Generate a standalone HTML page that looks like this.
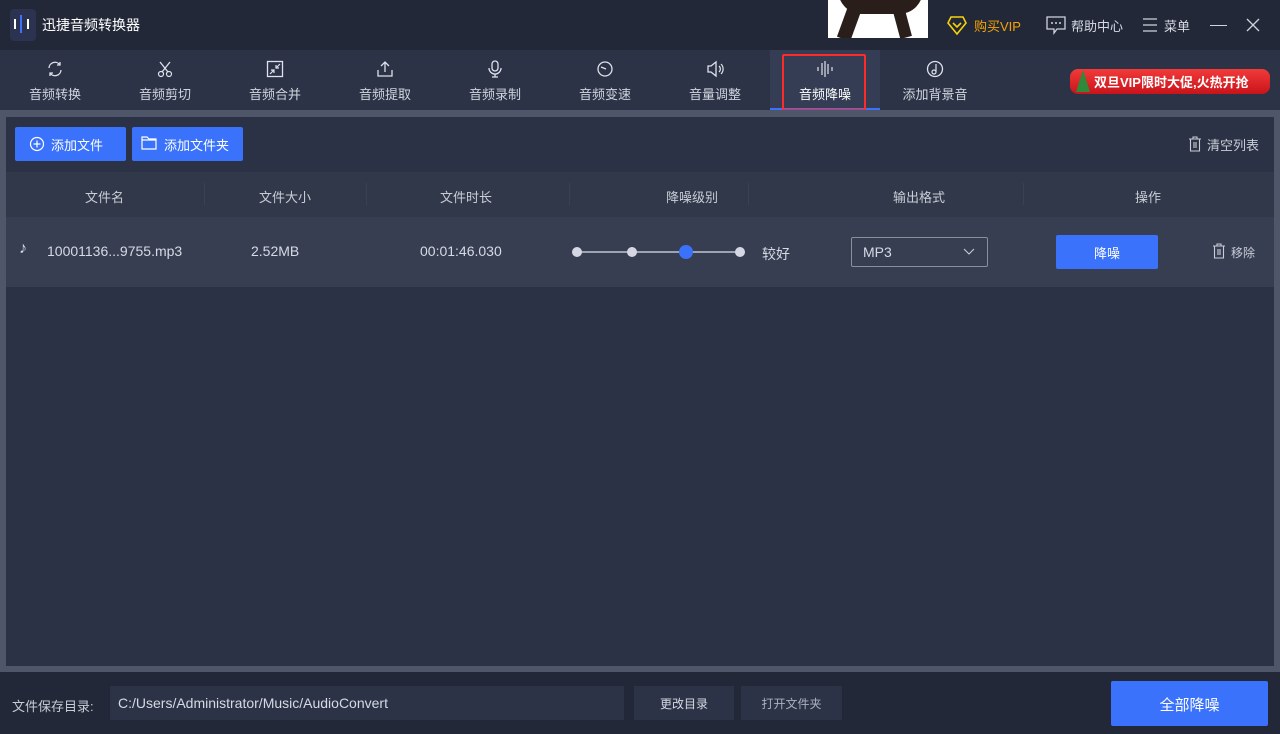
<!DOCTYPE html>
<html><head><meta charset="utf-8"><style>
*{margin:0;padding:0;box-sizing:border-box}
body{width:1280px;height:734px;overflow:hidden;background:#232839;font-family:"Liberation Sans","Noto Sans CJK SC",sans-serif;color:#d6dae4;position:relative;font-size:13px}
.a{position:absolute}
.tab{position:absolute;top:50px;height:60px;width:110px;text-align:center;font-size:13px;color:#d0d4de}
.tab svg{position:absolute;left:46px;top:10px}
.tab span{position:absolute;left:0;right:0;top:34px}
.hd{position:absolute;top:187px;font-size:13px;color:#c9cdd7;text-align:center}
.btn{position:absolute;background:#3a72fb;color:#fff;border-radius:2px;font-size:13px}
</style></head><body>
<div class="a" style="left:10px;top:9px;width:26px;height:32px;background:#2b3350;border-radius:4px"></div>
<div class="a" style="left:14px;top:19px;width:2px;height:10px;background:#fff"></div>
<div class="a" style="left:20px;top:15px;width:2px;height:18px;background:#3a72fb"></div>
<div class="a" style="left:27px;top:19px;width:2px;height:10px;background:#fff"></div>
<div class="a" style="left:42px;top:15px;font-size:14px;color:#fff">迅捷音频转换器</div>
<div class="a" style="left:828px;top:0;width:100px;height:38px;background:#fff;overflow:hidden">
<div class="a" style="left:10px;top:-10px;width:85px;height:24px;background:#2a1e1a;border-radius:0 0 40px 40px"></div>
<div class="a" style="left:14px;top:8px;width:14px;height:32px;background:#2a1e1a;transform:rotate(20deg)"></div>
<div class="a" style="left:68px;top:6px;width:12px;height:32px;background:#2a1e1a;transform:rotate(-15deg)"></div>
</div>
<svg class="a" style="left:946px;top:14px" width="22" height="22" viewBox="0 0 22 22"><path d="M5 3H17L20 9L11 20L2 9Z" fill="none" stroke="#f5d20a" stroke-width="1.6"/><path d="M7 9L11 13L15 9" fill="none" stroke="#f5d20a" stroke-width="1.6"/></svg>
<div class="a" style="left:974px;top:16px;font-size:13px;color:#f5a300">购买VIP</div>
<svg class="a" style="left:1045px;top:15px" width="22" height="20"><path d="M2 2H20V14H12L9 18V14H2Z" fill="none" stroke="#cfd3dc" stroke-width="1.3"/><circle cx="7" cy="8" r="1" fill="#cfd3dc"/><circle cx="11" cy="8" r="1" fill="#cfd3dc"/><circle cx="15" cy="8" r="1" fill="#cfd3dc"/></svg>
<div class="a" style="left:1071px;top:16px;font-size:13px;color:#d6dae4">帮助中心</div>
<svg class="a" style="left:1142px;top:17px" width="16" height="16"><path d="M1 2H15M1 8H15M1 14H15" stroke="#cfd3dc" stroke-width="1.3"/></svg>
<div class="a" style="left:1164px;top:16px;font-size:13px;color:#d6dae4">菜单</div>
<div class="a" style="left:1210px;top:25px;width:17px;height:1px;background:#cfd3dc"></div>
<svg class="a" style="left:1246px;top:18px" width="14" height="14"><path d="M1 1L13 13M13 1L1 13" stroke="#cfd3dc" stroke-width="1.3"/></svg>
<div class="a" style="left:0;top:50px;width:1280px;height:60px;background:#2c3347"></div>
<div class="a" style="left:770px;top:50px;width:110px;height:60px;background:#353d54"></div>
<div class="a" style="left:770px;top:108px;width:110px;height:3px;background:#3a72fb"></div>
<div class="a" style="left:782px;top:54px;width:84px;height:57px;border:2px solid #ff2a2a;border-radius:2px"></div>
<div class="tab" style="left:0"><svg width="18" height="18"><path d="M3 8A6 6 0 0 1 14 5M15 10A6 6 0 0 1 4 13" fill="none" stroke="#dfe2ea" stroke-width="1.3"/><path d="M14 2V5H11M4 16V13H7" fill="none" stroke="#dfe2ea" stroke-width="1.3"/></svg><span>音频转换</span></div>
<div class="tab" style="left:110px"><svg width="18" height="18"><path d="M4 2L12 12M14 2L6 12" stroke="#dfe2ea" stroke-width="1.3"/><circle cx="5" cy="14" r="2.5" fill="none" stroke="#dfe2ea" stroke-width="1.2"/><circle cx="13" cy="14" r="2.5" fill="none" stroke="#dfe2ea" stroke-width="1.2"/></svg><span>音频剪切</span></div>
<div class="tab" style="left:220px"><svg width="18" height="18"><rect x="1.5" y="1.5" width="15" height="15" fill="none" stroke="#dfe2ea" stroke-width="1.3"/><path d="M4 14L8 10M8 13V10H5M14 4L10 8M10 5V8H13" fill="none" stroke="#dfe2ea" stroke-width="1.2"/></svg><span>音频合并</span></div>
<div class="tab" style="left:330px"><svg width="18" height="18"><path d="M9 12V2M5 6L9 2L13 6M2 10V16H16V10" fill="none" stroke="#dfe2ea" stroke-width="1.3"/></svg><span>音频提取</span></div>
<div class="tab" style="left:440px"><svg width="18" height="18"><rect x="6" y="1" width="6" height="10" rx="3" fill="none" stroke="#dfe2ea" stroke-width="1.3"/><path d="M3 8A6 6 0 0 0 15 8M9 14V17M6 17H12" fill="none" stroke="#dfe2ea" stroke-width="1.3"/></svg><span>音频录制</span></div>
<div class="tab" style="left:550px"><svg width="18" height="18"><circle cx="9" cy="9" r="7" fill="none" stroke="#dfe2ea" stroke-width="1.3"/><path d="M5 7L10 9" stroke="#dfe2ea" stroke-width="1.3"/></svg><span>音频变速</span></div>
<div class="tab" style="left:660px"><svg width="18" height="18"><path d="M2 6H5L10 2V16L5 12H2Z" fill="none" stroke="#dfe2ea" stroke-width="1.3"/><path d="M13 6A4 4 0 0 1 13 12M15 4A7 7 0 0 1 15 14" fill="none" stroke="#dfe2ea" stroke-width="1.2"/></svg><span>音量调整</span></div>
<div class="tab" style="left:770px;color:#fff"><svg width="18" height="18"><path d="M2 7V11M6 3V15M9 1V17M12 4V14M16 7V11" stroke="#dfe2ea" stroke-width="1.2"/></svg><span>音频降噪</span></div>
<div class="tab" style="left:880px"><svg width="18" height="18"><circle cx="9" cy="9" r="7.5" fill="none" stroke="#dfe2ea" stroke-width="1.3"/><circle cx="8" cy="12" r="2" fill="none" stroke="#dfe2ea" stroke-width="1.2"/><path d="M10 12V4" stroke="#dfe2ea" stroke-width="1.2"/></svg><span>添加背景音</span></div>
<div class="a" style="left:1070px;top:69px;width:200px;height:25px;border-radius:8px;background:linear-gradient(#f23a3a,#c8141a);color:#fff;font-weight:bold;font-size:13px;padding:3px 0 0 24px">双旦VIP限时大促,火热开抢</div>
<div class="a" style="left:1076px;top:70px;width:0;height:0;border-left:7px solid transparent;border-right:7px solid transparent;border-bottom:22px solid #2f8a3a"></div>
<div class="a" style="left:0;top:110px;width:1280px;height:562px;background:#50566a"></div>
<div class="a" style="left:6px;top:117px;width:1268px;height:549px;background:#2c3245"></div>
<div class="btn" style="left:15px;top:127px;width:111px;height:34px;padding:8px 0 0 36px">添加文件</div>
<svg class="a" style="left:29px;top:136px" width="16" height="16"><circle cx="8" cy="8" r="6.5" fill="none" stroke="#fff" stroke-width="1.2"/><path d="M8 4.5V11.5M4.5 8H11.5" stroke="#fff" stroke-width="1.2"/></svg>
<div class="btn" style="left:132px;top:127px;width:111px;height:34px;padding:8px 0 0 32px">添加文件夹</div>
<svg class="a" style="left:141px;top:135px" width="17" height="16"><path d="M1 2H6L8 4H15V14H1Z M1 5H15" fill="none" stroke="#fff" stroke-width="1.2"/></svg>
<svg class="a" style="left:1188px;top:136px" width="14" height="16"><path d="M1 3H13M5 3V1H9V3M2.5 3V15H11.5V3M6 6V12M8 6V12" fill="none" stroke="#c9cdd7" stroke-width="1.1"/></svg>
<div class="a" style="left:1207px;top:135px;color:#c9cdd7">清空列表</div>
<div class="a" style="left:6px;top:172px;width:1268px;height:45px;background:#313849"></div>
<div class="a" style="left:204px;top:183px;width:1px;height:22px;background:#3a4154"></div>
<div class="a" style="left:366px;top:183px;width:1px;height:22px;background:#3a4154"></div>
<div class="a" style="left:569px;top:183px;width:1px;height:22px;background:#3a4154"></div>
<div class="a" style="left:748px;top:183px;width:1px;height:22px;background:#3a4154"></div>
<div class="a" style="left:1023px;top:183px;width:1px;height:22px;background:#3a4154"></div>
<div class="hd" style="left:85px">文件名</div>
<div class="hd" style="left:259px">文件大小</div>
<div class="hd" style="left:440px">文件时长</div>
<div class="hd" style="left:666px">降噪级别</div>
<div class="hd" style="left:893px">输出格式</div>
<div class="hd" style="left:1135px">操作</div>
<div class="a" style="left:6px;top:217px;width:1268px;height:70px;background:#373e52"></div>
<div class="a" style="left:19px;top:240px;font-size:16px;color:#d6dae4">♪</div>
<div class="a" style="left:47px;top:243px;font-size:14px;color:#d6dae4">10001136...9755.mp3</div>
<div class="a" style="left:251px;top:243px;font-size:14px;color:#d6dae4">2.52MB</div>
<div class="a" style="left:420px;top:243px;font-size:14px;color:#d6dae4">00:01:46.030</div>
<div class="a" style="left:577px;top:251px;width:164px;height:2px;background:#9ea3b2"></div>
<div class="a" style="left:572px;top:247px;width:10px;height:10px;border-radius:50%;background:#d5d8e4"></div>
<div class="a" style="left:627px;top:247px;width:10px;height:10px;border-radius:50%;background:#d5d8e4"></div>
<div class="a" style="left:679px;top:245px;width:14px;height:14px;border-radius:50%;background:#3a72fb"></div>
<div class="a" style="left:735px;top:247px;width:10px;height:10px;border-radius:50%;background:#d5d8e4"></div>
<div class="a" style="left:762px;top:244px;font-size:14px;color:#d6dae4">较好</div>
<div class="a" style="left:851px;top:237px;width:137px;height:30px;border:1px solid #8a8f9c;border-radius:2px;padding:6px 0 0 11px;font-size:14px;color:#d6dae4">MP3</div>
<svg class="a" style="left:963px;top:248px" width="12" height="8"><path d="M1 1L6 6L11 1" fill="none" stroke="#c9cdd7" stroke-width="1.1"/></svg>
<div class="btn" style="left:1056px;top:235px;width:102px;height:34px;text-align:center;padding-top:8px">降噪</div>
<svg class="a" style="left:1212px;top:243px" width="14" height="16"><path d="M1 3H13M5 3V1H9V3M2.5 3V15H11.5V3M6 6V12M8 6V12" fill="none" stroke="#c9cdd7" stroke-width="1.1"/></svg>
<div class="a" style="left:1231px;top:244px;font-size:12px;color:#c9cdd7">移除</div>
<div class="a" style="left:12px;top:696px;font-size:13px;color:#c9cdd7">文件保存目录:</div>
<div class="a" style="left:110px;top:686px;width:514px;height:34px;background:#2d3346;padding:9px 0 0 8px;font-size:14px;color:#d6dae4">C:/Users/Administrator/Music/AudioConvert</div>
<div class="a" style="left:634px;top:686px;width:100px;height:34px;background:#2d3346;text-align:center;padding-top:9px;font-size:12px;color:#d6dae4">更改目录</div>
<div class="a" style="left:741px;top:686px;width:101px;height:34px;background:#2d3346;text-align:center;padding-top:9px;font-size:12px;color:#aab0bd">打开文件夹</div>
<div class="btn" style="left:1111px;top:681px;width:157px;height:45px;text-align:center;padding-top:13px;font-size:15px">全部降噪</div>
</body></html>
